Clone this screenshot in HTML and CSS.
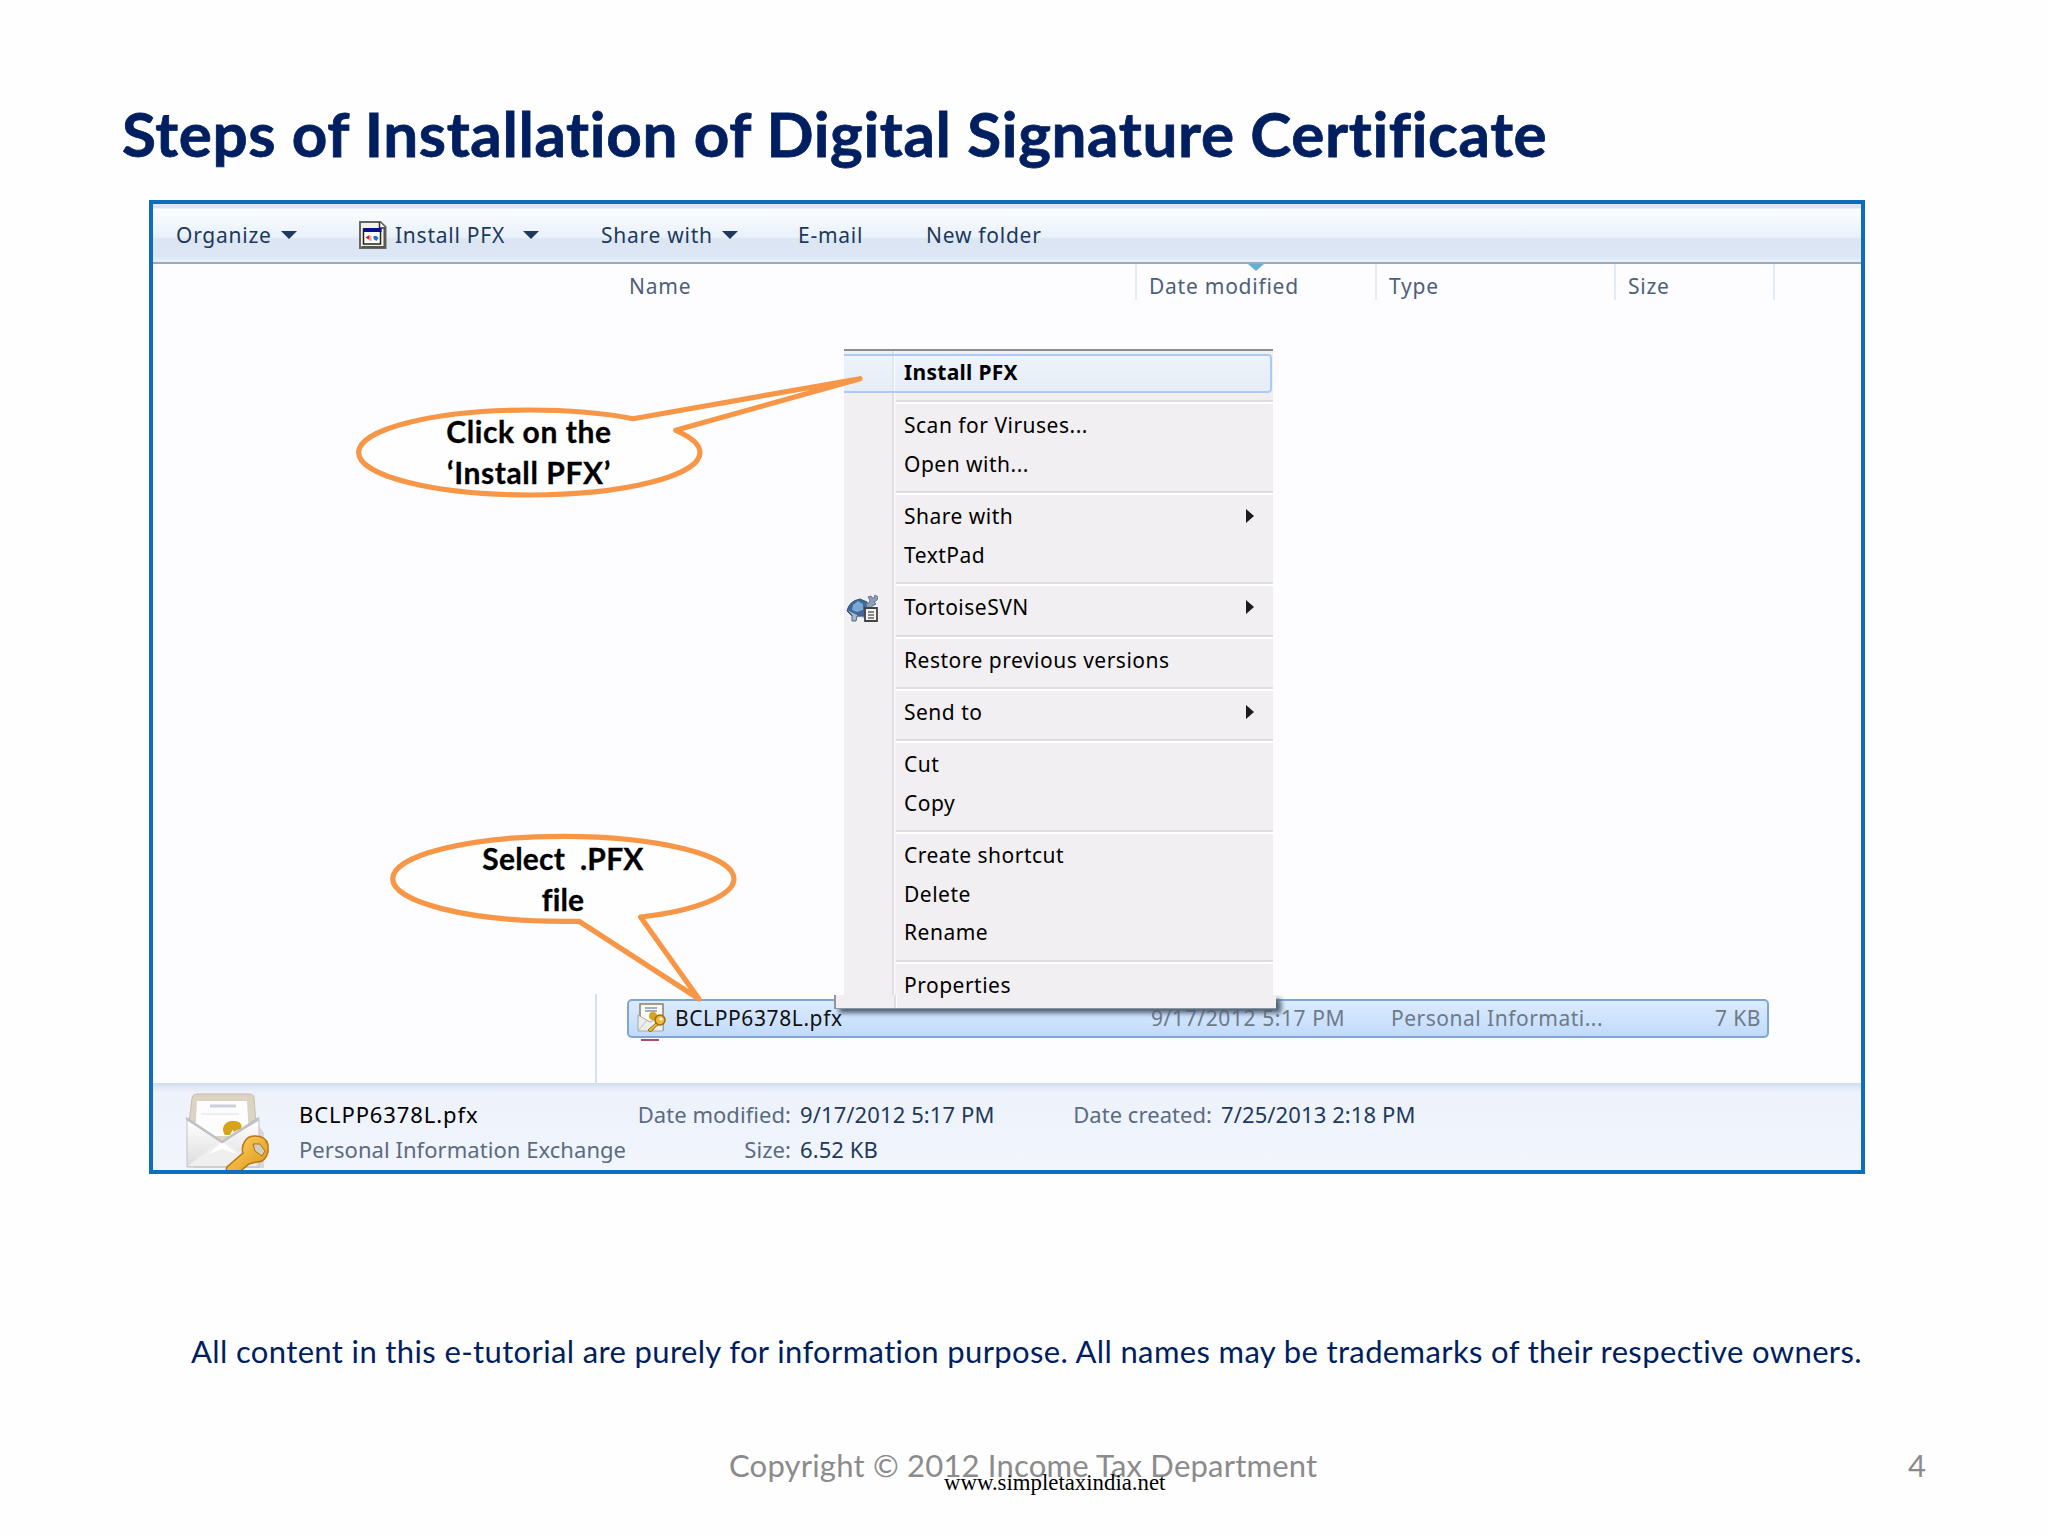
FILE: index.html
```html
<!DOCTYPE html>
<html lang="en">
<head>
<meta charset="utf-8">
<title>Steps of Installation of Digital Signature Certificate</title>
<link rel="stylesheet" href="styles.css">
</head>
<body>
<main class="slide">
  <h1 class="title"><span>Steps of Installation of Digital Signature Certificate</span></h1>

  <section class="explorer">
    <nav class="toolbar">
      <span class="tool organize"><span>Organize</span><i class="caret"></i></span>
      <span class="tool install">
        <svg class="file-icon" viewBox="0 0 28 28"><path d="M1.500 1H22l5 5v21H1.500z" fill="#f3f1e8" stroke="#67675f" stroke-width="2"/><path d="M21 1v6h6" fill="#fff" stroke="#333" stroke-width="1.500"/><path d="M26 8v18H3" fill="none" stroke="#555" stroke-width="2"/><path d="M5 8h17v15H5z" fill="#fff" stroke="#222" stroke-width="1.500"/><path d="M5 7h18v4H5z" fill="#06108e"/><path d="M7 16.500l4-2.500v5z" fill="#d21515"/><path d="M11 15h2v5h-2z" fill="#e8a08c"/><path d="M15 15h3l2 2-2 3-3-2z" fill="#1674d2"/></svg>
        <span>Install PFX</span><i class="caret"></i></span>
      <span class="tool share"><span>Share with</span><i class="caret"></i></span>
      <span class="tool email"><span>E-mail</span></span>
      <span class="tool folder"><span>New folder</span></span>
    </nav>

    <div class="browser">
      <div class="tree"></div>
      <div class="files">
        <div class="columns">
          <span class="col"><span>Name</span></span>
          <span class="col sorted"><span>Date modified</span></span>
          <span class="col"><span>Type</span></span>
          <span class="col"><span>Size</span></span>
        </div>
        <div class="row">
          <svg class="row-icon" viewBox="0 0 30 30"><path d="M3 1h23v26H3z" fill="#faf9f3" stroke="#85806d" stroke-width="1.500"/><path d="M8 5h12M8 8h12" stroke="#8297b8" stroke-width="1.500"/><path d="M1 12l12 7 13-7v16H1z" fill="#eceeed" stroke="#a8a8a0"/><path d="M1 28l9-11" stroke="#bbb"/><circle cx="16" cy="13" r="4" fill="#d8a518"/><circle cx="23" cy="17" r="5" fill="#f1b83a" stroke="#9c6a12" stroke-width="1.500"/><circle cx="24" cy="16" r="1.600" fill="#fff"/><path d="M19 20l-8 7 2 2 3-2 1-2 4-3z" fill="#f1b83a" stroke="#9c6a12"/></svg>
          <span class="row-name">BCLPP6378L.pfx</span>
          <span class="row-date">9/17/2012 5:17 PM</span>
          <span class="row-type">Personal Informati...</span>
          <span class="row-size">7 KB</span>
        </div>
        <div class="next-row"></div>
      </div>
    </div>

    <footer class="details">
      <svg class="big-icon" viewBox="0 0 88 77"><defs><linearGradient id="env" x1="0" y1="0" x2="0" y2="1"><stop offset="0" stop-color="#fff"/><stop offset="1" stop-color="#dcdcdc"/></linearGradient><linearGradient id="gold" x1="0" y1="0" x2="1" y2="1"><stop offset="0" stop-color="#ffd56b"/><stop offset="1" stop-color="#dc9312"/></linearGradient></defs>
        <path d="M73 31l7 9v35H10l-3-4z" fill="#c9ccd1" opacity=".7"/>
        <path d="M5 30L8 5q1-4 5-4h52q5 0 5 4l2 25v20H5z" fill="#ddd3c2" stroke="#c9bda9"/>
        <path d="M13 8h50l2 35H11z" fill="#fdfdfd"/><path d="M26 13h26" stroke="#ccd0da" stroke-width="3"/><path d="M17 21h38" stroke="#eceef2" stroke-width="2"/>
        <path d="M41 42c-5-8 1-14 8-14 7 0 11 4 7 9l-6-3-4 8z" fill="#d7a31a"/>
        <path d="M3 27l35 22 37-22v47H3z" fill="url(#env)" stroke="#c1c1c1"/><path d="M4 73l34-27 36 27z" fill="#efefef"/><path d="M23 62l15-13 17 13-17-6z" fill="#fff"/><path d="M41 42c-4-8 1-14 8-14 6 0 9 3 8 7l-7 4-2-3-3 6z" fill="#d7a31a"/><path d="M2 25l36 24 37-24" fill="none" stroke="#bfc1c4" stroke-width="2.500"/>
        <path d="M61 48q3-5 10-5 11 0 13 9v7q-3 11-12 10l-7 2-12 10H41l2-7 16-14q-2-6 2-12z" fill="url(#gold)" stroke="#b87812" stroke-width="1.500"/><path d="M69 51l7 0 5 7-3 5-7-5z" fill="#d5cdbb" stroke="#a87517"/>
      </svg>
      <div class="detail-name"><b>BCLPP6378L.pfx</b><span>Personal Information Exchange</span></div>
      <dl class="meta first"><dt>Date modified:</dt><dd>9/17/2012 5:17 PM</dd><dt>Size:</dt><dd>6.52 KB</dd></dl>
      <dl class="meta second"><dt>Date created:</dt><dd>7/25/2013 2:18 PM</dd></dl>
    </footer>

    <div class="menu">
      <div class="item active">Install PFX</div>
      <hr>
      <div class="item">Scan for Viruses...</div>
      <div class="item">Open with...</div>
      <hr>
      <div class="item sub">Share with</div>
      <div class="item">TextPad</div>
      <hr>
      <div class="item sub">
        <svg class="tortoise" viewBox="0 0 32 28"><path d="M1 17q2-10 13-12l7 3 2 9-3 5H6z" fill="#3e6897" stroke="#345477"/><path d="M7 11l5-4 5 3v6l-6 2-5-2z" fill="#7ba8d2"/><path d="M1 16l5 5v6h4l1-5h7l3 4" fill="#a6b9ce" stroke="#52657b"/><path d="M20 10l3-1 1-3-2-3 3-1 1 2h2l1-3 3 2-1 3-3 2 2 2-4 2-1 4h-3z" fill="#8ba0b8" stroke="#61758d"/><path d="M19 14h12v13H19z" fill="#f3f3f3" stroke="#444" stroke-width="1.800"/><path d="M22 18h6M22 21h6M22 24h6" stroke="#666" stroke-width="1.300"/></svg>
        TortoiseSVN</div>
      <hr>
      <div class="item">Restore previous versions</div>
      <hr>
      <div class="item sub">Send to</div>
      <hr>
      <div class="item">Cut</div>
      <div class="item">Copy</div>
      <hr>
      <div class="item">Create shortcut</div>
      <div class="item">Delete</div>
      <div class="item">Rename</div>
      <hr>
      <div class="item">Properties</div>
      <div class="menu-foot"></div>
    </div>

    <div class="callout callout-install">
      <svg viewBox="0 0 520 130"><path d="M279 48.700L506 8.700 321.700 60.300C337 67 346 75 346 82.500C346 106 269.600 125 175.300 125S4.600 106 4.600 82.500S81 40 175.300 40C214 40 250 43 279 48.700Z"/></svg>
      <p>Click on the<br>‘Install PFX’</p>
    </div>
    <div class="callout callout-select">
      <svg viewBox="0 0 350 180"><path d="M189 91.300L309 169 250.500 87C304 81 344 66 344 48.800C344 25.300 267.600 6.300 173.300 6.300S2.700 25.300 2.700 48.800S79 91.300 173.300 91.300Z"/></svg>
      <p>Select&nbsp; .PFX<br>file</p>
    </div>
  </section>

  <p class="disclaimer"><span>All content in this e-tutorial are purely for information purpose. All names may be trademarks of their respective owners.</span></p>
  <footer class="slide-foot">
    <span class="copyright">Copyright © 2012 Income Tax Department</span>
    <span class="page">4</span>
    <span class="site">www.simpletaxindia.net</span>
  </footer>
</main>
</body>
</html>
```
FILE: styles.css
```css
* { box-sizing: border-box; }
body { margin: 0; background: #fefefe; }
.slide {
  width: 2048px; height: 1536px; overflow: hidden;
  display: flex; flex-direction: column;
  font-family: Lato, sans-serif; white-space: nowrap;
  font-variant-ligatures: none;
}
.title {
  margin: 0; padding: 91px 0 0 122px; height: 200px;
  font-size: 62px; line-height: 84px; font-weight: 700; color: #001f60;
  letter-spacing: .62px; -webkit-text-stroke: .8px #001f60;
}
.explorer {
  position: relative; flex: none;
  width: 1716px; height: 974px; margin-left: 149px;
  border: 4px solid #0d6fba; background: #fdfdff;
  display: flex; flex-direction: column;
  font-family: "Noto Sans", sans-serif; font-size: 21px; color: #1e395b;
  letter-spacing: .5px;
}
.toolbar {
  height: 60px; flex: none; display: flex; align-items: center;
  padding: 4px 0 0 23px; border-bottom: 2px solid #9aaabd;
  background: linear-gradient(#dbe3f5 0 4px, #fbfdff 5px, #e9f1fb 33px, #dce6f3 35px, #dce6f4 53px, #e7eff9 57px);
  letter-spacing: .75px;
}
.tool { display: flex; align-items: center; flex: none; }
.organize { width: 182px; } .install { width: 243px; } .share { width: 197px; } .email { width: 128px; }
.caret { border: 8px solid transparent; border-top: 8px solid #1e395b; border-bottom: 0; margin-left: 9px; }
.install .caret { margin-left: 18px; }
.file-icon { width: 29px; height: 28px; margin-right: 8px; }
.browser { flex: 1; display: flex; }
.tree { width: 444px; margin-top: 730px; border-right: 2px solid #d5e0ee; }
.files { flex: 1; display: flex; flex-direction: column; margin-left: -4px; }
.columns { display: grid; grid-template-columns: 544px 240px 239px 159px; height: 36px; color: #4c607a; letter-spacing: .75px; }
.col { position: relative; padding: 8px 0 0 12px; line-height: 28px; border-right: 2px solid #e3ebf5; }
.col:first-child { padding-left: 36px; }
.sorted::before { content: ""; position: absolute; left: 111px; top: 0; border: 8px solid transparent; border-top: 7px solid #69aed5; border-bottom: 0; }
.row {
  flex: none; width: 1142px; height: 39px; margin: 699px 0 0 34px; padding: 0 0 2px 8px;
  border: 2px solid #7fa5d3; border-radius: 5px;
  background: linear-gradient(#dcebfd, #c1dbfc);
  display: flex; align-items: center; color: #6d7a89;
}
.row-icon { width: 30px; height: 30px; margin-right: 8px; }
.row-name { width: 476px; color: #111; letter-spacing: .6px; }
.row-date { width: 240px; letter-spacing: .6px; } .row-type { width: 250px; } .row-size { width: 120px; text-align: right; }
.next-row { width: 18px; height: 2px; margin: 1px 0 0 48px; background: #a4506a; }
.details {
  flex: none; height: 87px; display: flex; font-size: 22px; line-height: 35px; padding-top: 14px;
  background: linear-gradient(#cfdcea, #dfe8f4 4px, #edf2fb 9px, #f2f5fc);
  letter-spacing: .05px;
}
.big-icon { width: 88px; height: 77px; margin: -4px 27px 0 31px; flex: none; }
.detail-name { width: 329px; display: flex; flex-direction: column; color: #5a6b82; }
.detail-name b { font-weight: 400; color: #000; letter-spacing: .9px; }
.meta { margin: 0; display: grid; grid-template-rows: 35px 35px; column-gap: 9px; align-content: start; }
.first { grid-template-columns: 163px 261px; }
.second { grid-template-columns: 151px 210px; }
.meta dt { text-align: right; color: #5a6b82; } .meta dd { margin: 0; color: #1e395b; letter-spacing: .1px; }

.menu {
  position: absolute; left: 691px; top: 145px; width: 429px; height: 660px; isolation: isolate;
  padding-top: 4px; border-top: 2px solid #8e8c90; color: #000;
  background: linear-gradient(90deg, #f1eff1 48px, #dfdfe1 48px 50px, #fff 50px 51px, #f1eff1 51px);
}
.item { position: relative; height: 38.700px; line-height: 32px; padding-left: 60px; }
.active { font-weight: 700; width: 428px; letter-spacing: .3px; line-height: 33px; margin: -1px 0 7.800px; border: 2px solid #abcbf4; border-left: 0; border-radius: 0 4px 4px 0; background: linear-gradient(90deg, transparent 48px, #dfe6f2 48px 50px, #fff 50px 51px, transparent 51px), linear-gradient(#eff3fa, #e5edf7); }
.menu hr { height: 4px; margin: 4.800px 0 4.800px 52px; border: 0; border-top: 2px solid #dedee0; border-bottom: 2px solid #fff; }
.sub::after { content: ""; position: absolute; right: 19px; top: 9px; border: 7px solid transparent; border-left: 8px solid #1b1b1b; border-right: 0; }
.tortoise { position: absolute; left: 2px; top: 3px; width: 32px; height: 28px; }
.menu-foot {
  position: absolute; z-index: -1; left: -10px; bottom: 0; width: 442px; height: 14px;
  background: linear-gradient(90deg, #f1eff1 58px, #dfdfe1 58px 60px, #fff 60px 61px, #f1eff1 61px);
  border-left: 2px solid #8b969f; border-bottom: 1px solid #8b969f;
  box-shadow: 5px 4px 5px #4f5f74; clip-path: inset(0 -12px -12px 0);
}

.callout { position: absolute; }
.callout svg { display: block; fill: #fefefe; stroke: #f79646; stroke-width: 5.200; stroke-linejoin: round; }
.callout p { position: absolute; margin: 0; text-align: center; font: 700 30px/41px Lato, sans-serif; letter-spacing: .6px; color: #000; -webkit-text-stroke: .3px #000; }
.callout-install { left: 201px; top: 166px; width: 520px; }
.callout-install svg { width: 520px; height: 130px; }
.callout-install p { left: 75px; top: 41px; width: 200px; }
.callout-select { left: 237px; top: 626px; width: 350px; }
.callout-select svg { width: 350px; height: 180px; }
.callout-select p { left: 73px; top: 8px; width: 200px; letter-spacing: .2px; }

.disclaimer { margin: 157px 0 0 191px; font-size: 31px; line-height: 40px; letter-spacing: .365px; color: #001f60; }
.slide-foot { position: relative; margin-top: 74px; display: flex; padding-left: 729px; font-size: 31px; line-height: 40px; letter-spacing: .2px; color: #8b8b8d; }
.copyright { width: 1179px; }
.site { position: absolute; left: 944px; top: 25px; font: 22.800px/26px "Liberation Serif", serif; letter-spacing: 0; color: #000; }
```
